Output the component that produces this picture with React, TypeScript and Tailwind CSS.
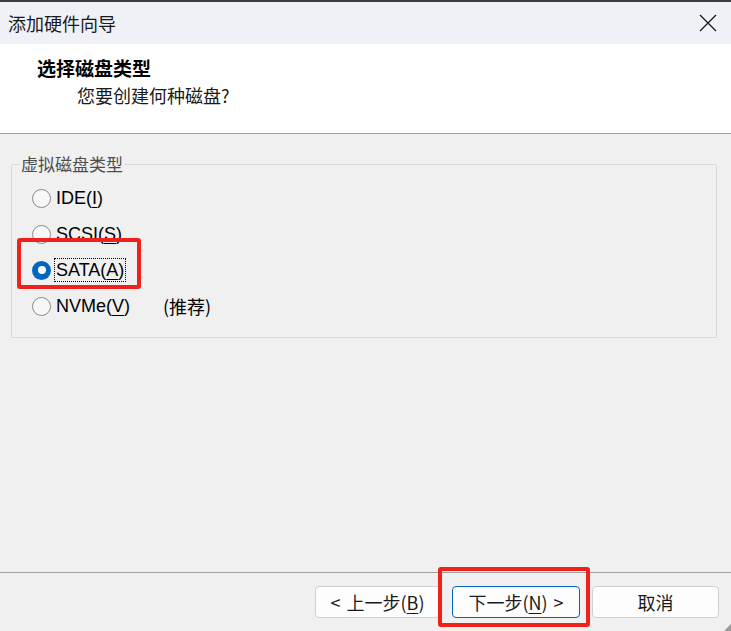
import React from 'react';

const cjk = { fontFamily: '"Noto Sans CJK SC", "Noto Sans", sans-serif' };
const latin = { fontFamily: '"Liberation Sans", "Noto Sans CJK SC", sans-serif' };

function Radio({ checked }: { checked?: boolean }) {
  if (checked) {
    return (
      <span className="flex h-[19px] w-[19px] items-center justify-center rounded-full bg-[#0067c0]">
        <span className="h-[8px] w-[8px] rounded-full bg-white" />
      </span>
    );
  }
  return <span className="h-[19px] w-[19px] rounded-full border border-[#8a8a8a] bg-[#f7f7f7]" />;
}

function Option({
  pre,
  key_,
  checked,
  extra,
}: {
  pre: string;
  key_: string;
  checked?: boolean;
  extra?: string;
}) {
  return (
    <div className="flex h-[36px] items-center">
      <Radio checked={checked} />
      <span
        className={`ml-[4px] flex items-center text-[18px] leading-[22px] text-black ${
          checked ? 'outline outline-1 outline-dotted outline-black px-[1px]' : 'px-[1px]'
        }`}
        style={latin}
      >
        {pre}(<span className="underline underline-offset-[3px]">{key_}</span>)
      </span>
      {extra && (
        <span className="ml-[32px] text-[18px] text-black" style={cjk}>
          {extra}
        </span>
      )}
    </div>
  );
}

export default function App() {
  return (
    <div className="relative flex h-[631px] w-[731px] flex-col overflow-hidden bg-[#f0f0f0]">
      <div className="h-[2px] bg-[#3b3b3b]" />
      {/* title bar */}
      <div className="flex h-[42px] items-center justify-between bg-[#eff1f7] pl-[8px] pr-[14px]">
        <span className="text-[18px] text-[#1a1a1a]" style={cjk}>
          添加硬件向导
        </span>
        <svg width="18" height="18" viewBox="0 0 18 18">
          <path d="M1 1 L17 17 M17 1 L1 17" stroke="#1a1a1a" strokeWidth="1.3" />
        </svg>
      </div>

      {/* header */}
      <div className="h-[90px] border-b border-[#a0a0a0] bg-white pl-[37px] pt-[11px]">
        <div className="text-[19px] font-bold leading-[25px] text-black" style={cjk}>
          选择磁盘类型
        </div>
        <div className="ml-[40px] mt-[3px] text-[18px] leading-[24px] text-[#1a1a1a]" style={cjk}>
          您要创建何种磁盘?
        </div>
      </div>

      {/* body */}
      <div className="flex-1 pl-[11px] pr-[14px] pt-[20px]">
        <fieldset className="h-[184px] rounded-[1px] border border-[#d9d9d9] pt-[6px]">
          <legend className="ml-[8px] px-[1px] text-[17px] leading-[20px] text-[#4d4d4d]" style={cjk}>
            虚拟磁盘类型
          </legend>
          <div className="flex flex-col pl-[20px]">
            <Option pre="IDE" key_="I" />
            <Option pre="SCSI" key_="S" />
            <Option pre="SATA" key_="A" checked />
            <Option pre="NVMe" key_="V" extra="(推荐)" />
          </div>
        </fieldset>
      </div>

      {/* footer */}
      <div className="flex h-[59px] items-start justify-end gap-[12px] border-t border-[#a0a0a0] pr-[12px] pt-[13px]">
        <button
          className="flex h-[32px] w-[125px] items-center justify-center rounded-[4px] border border-[#d0d0d0] bg-[#fdfdfd] text-[18px] text-[#1a1a1a]"
          style={cjk}
        >
          <span className="mr-[6px]">&lt;</span>上一步(<span className="underline underline-offset-[3px]">B</span>)
        </button>
        <button
          className="flex h-[32px] w-[128px] items-center justify-center rounded-[4px] border border-[#0067c0] bg-[#fdfdfd] text-[18px] text-[#1a1a1a]"
          style={cjk}
        >
          下一步(<span className="underline underline-offset-[3px]">N</span>)<span className="ml-[6px]">&gt;</span>
        </button>
        <button
          className="flex h-[32px] w-[127px] items-center justify-center rounded-[4px] border border-[#d0d0d0] bg-[#fdfdfd] text-[18px] text-[#1a1a1a]"
          style={cjk}
        >
          取消
        </button>
      </div>

      {/* annotation boxes */}
      <div className="pointer-events-none absolute left-[17px] top-[238px] h-[51px] w-[124px] rounded-[3px] border-[4px] border-[#f0201a]" />
      <div className="pointer-events-none absolute left-[438px] top-[567px] h-[60px] w-[152px] rounded-[3px] border-[4px] border-[#f0201a]" />

      {/* resize grip */}
      <svg className="absolute bottom-0 right-0" width="7" height="7" viewBox="0 0 7 7">
        <path d="M7 0 L7 7 L0 7 Z" fill="#9a9a9a" />
      </svg>
    </div>
  );
}
